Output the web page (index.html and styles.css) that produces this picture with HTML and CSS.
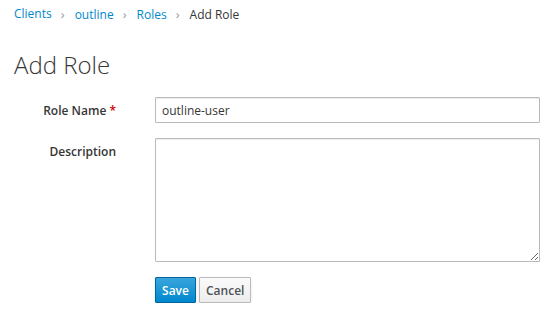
FILE: index.html
```html
<!DOCTYPE html>
<html lang="en">
<head>
  <meta charset="UTF-8">
  <title>Add Role</title>
  <link rel="stylesheet" href="styles.css">
</head>
<body>
  <div class="page">
    <ol class="breadcrumb">
      <li><a href="#">Clients</a></li>
      <li><a href="#">outline</a></li>
      <li><a href="#">Roles</a></li>
      <li class="active">Add Role</li>
    </ol>

    <h1>Add Role</h1>

    <form class="role-form">
      <div class="form-row">
        <label for="name">Role Name <span class="required">*</span></label>
        <input type="text" id="name" class="form-control" value="outline-user">
      </div>
      <div class="form-row">
        <label for="description">Description</label>
        <textarea id="description" class="form-control textarea"></textarea>
      </div>
      <div class="form-row">
        <div></div>
        <div class="buttons">
          <button type="submit" class="btn btn-primary">Save</button>
          <button type="button" class="btn btn-default">Cancel</button>
        </div>
      </div>
    </form>
  </div>
</body>
</html>
```

FILE: styles.css
```css
:root {
  --link-color: #0088ce;
  --text-color: #363636;
  --border-color: #bababa;
  --required-color: #c00;
}
body {
  margin: 0;
  font-family: 'Open Sans', sans-serif;
  font-size: 12px;
  color: var(--text-color);
  background: #fff;
}
.page {
  padding: 0 14px;
}
.breadcrumb {
  list-style: none;
  margin: 0;
  padding: 5px 0 0;
  display: flex;
  line-height: 18px;
}
.breadcrumb li + li::before {
  content: "\203A";
  color: #9c9c9c;
  padding: 0 10px 0 9px;
  font-size: 13px;
}
.breadcrumb a {
  color: var(--link-color);
  text-decoration: none;
}
.breadcrumb .active {
  color: var(--text-color);
}
h1 {
  font-size: 24px;
  font-weight: 300;
  margin: 26px 0 17px;
  line-height: 30px;
}
.role-form {
  display: flex;
  flex-direction: column;
  gap: 15px;
}
.form-row {
  display: grid;
  grid-template-columns: 102px 385px;
  column-gap: 39px;
}
.form-row label {
  text-align: right;
  font-weight: 600;
  padding-top: 5px;
  line-height: 18px;
}
.required {
  color: var(--required-color);
}
.form-control {
  box-sizing: border-box;
  width: 385px;
  height: 26px;
  border: 1px solid var(--border-color);
  border-radius: 1px;
  box-shadow: inset 0 1px 1px rgba(3, 3, 3, 0.075);
  padding: 2px 6px;
  font-family: inherit;
  font-size: 12px;
  color: var(--text-color);
  margin: 0;
}
.textarea {
  height: 124px;
  resize: both;
  display: block;
}
.buttons {
  display: flex;
  gap: 3px;
}
.btn {
  box-sizing: border-box;
  height: 26px;
  border-radius: 1px;
  padding: 2px 6px;
  font-family: inherit;
  font-size: 12px;
  font-weight: 600;
  cursor: pointer;
  box-shadow: 0 2px 3px rgba(3, 3, 3, 0.1);
}
.btn-primary {
  width: 41px;
  color: #fff;
  border: 1px solid #00659c;
  background: linear-gradient(to bottom, #39a5dc 0%, #0088ce 100%);
}
.btn-default {
  width: 52px;
  color: #4d5258;
  border: 1px solid #bbb;
  background: linear-gradient(to bottom, #fafafa 0%, #ededed 100%);
}
```
